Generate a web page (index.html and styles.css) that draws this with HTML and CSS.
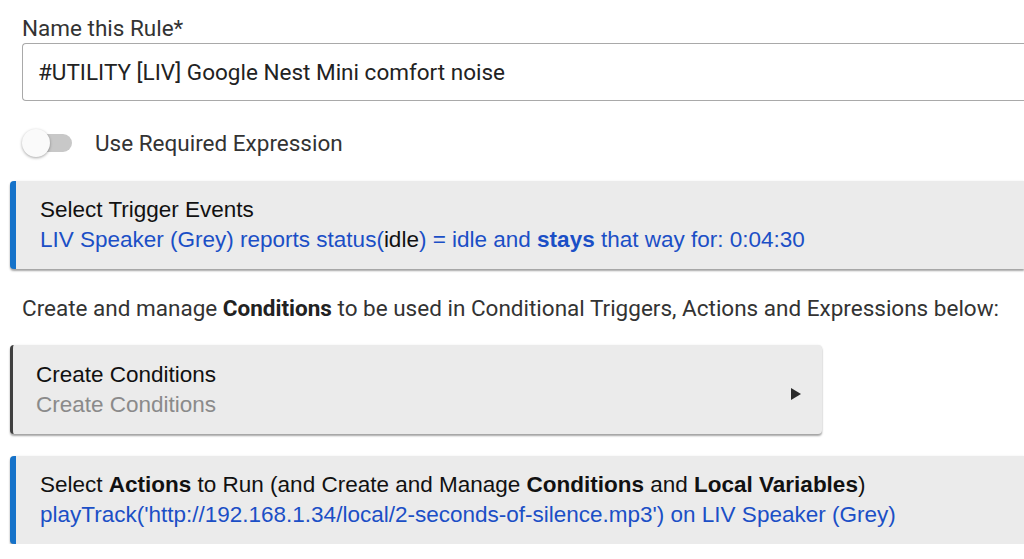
FILE: index.html
```html
<!DOCTYPE html>
<html lang="en">
<head>
    <meta charset="UTF-8">
    <meta name="viewport" content="width=device-width, initial-scale=1.0">
    <title>Rule</title>
    <link rel="stylesheet" href="styles.css">
</head>
<body>

<div class="page">
    <div class="field-label">Name this Rule*</div>
    <div class="name-input">#UTILITY [LIV] Google Nest Mini comfort noise</div>

    <!-- switch row -->
    <div class="switch-row">
        <span class="switch"><span class="knob"></span></span>
        <span class="switch-label">Use Required Expression</span>
    </div>

    <div class="card card-blue trigger-card">
        <div class="card-title">Select Trigger Events</div>
        <div class="card-desc">LIV Speaker (Grey) reports status(<span class="plain">idle</span>) = idle and <b>stays</b> that way for: 0:04:30</div>
    </div>

    <p class="note">Create and manage <b>Conditions</b> to be used in Conditional Triggers, Actions and Expressions below:</p>

    <div class="card card-dark cond-card">
        <div>
            <div class="card-title">Create Conditions</div>
            <div class="card-sub">Create Conditions</div>
        </div>
        <span class="arrow"></span>
    </div>

    <div class="card card-blue action-card">
        <div class="card-title">Select <b>Actions</b> to Run (and Create and Manage <b>Conditions</b> and <b>Local Variables</b>)</div>
        <div class="card-desc">playTrack('http://192.168.1.34/local/2-seconds-of-silence.mp3') on LIV Speaker (Grey)</div>
    </div>
</div>

</body>
</html>
```

FILE: styles.css
```css
html, body {
    margin: 0;
    overflow: hidden;
    background: #fff;
}

.page {
    font-family: Roboto, "Noto Sans", sans-serif;
    font-size: 22.5px;
    color: #333;
}

.field-label {
    margin: 15px 0 0 22px;
    line-height: 26px;
}

.name-input {
    margin: 2px 0 0 22px;
    height: 56px;
    line-height: 56px;
    border: 1px solid #a9a9a9;
    border-right: none;
    border-radius: 4px 0 0 4px;
    padding-left: 15px;
    color: #222;
}

.switch-row {
    display: flex;
    align-items: center;
    height: 30px;
    margin-top: 27px;
}

.switch {
    position: relative;
    width: 36px;
    height: 18px;
    margin-left: 36px;
    border-radius: 9px;
    background: #c8c8c8;
}

.knob {
    position: absolute;
    left: -14px;
    top: -5px;
    width: 28px;
    height: 28px;
    border-radius: 50%;
    background: #fafafa;
    box-shadow: 0 1px 3px rgba(0, 0, 0, 0.35);
}

.switch-label {
    margin-left: 23px;
    color: #333;
}

.card {
    margin-left: 10px;
    background: #ebebeb;
    border-radius: 4px 0 0 4px;
    box-shadow: 0 2px 2px rgba(0, 0, 0, 0.35), 0 0 2px rgba(0, 0, 0, 0.08);
    font-family: "Liberation Sans", Arial, sans-serif;
    font-size: 22.5px;
    line-height: 30px;
    color: #111;
    box-sizing: border-box;
}

.card-blue {
    border-left: 6px solid #1572c9;
    padding: 14px 0 14px 24px;
}

.trigger-card {
    margin-top: 23px;
}

.action-card {
    margin-top: 22px;
}

.card-desc {
    color: #1b4fc6;
}

.card-desc .plain {
    color: #111;
}

.note {
    margin: 27px 0 0 22px;
    line-height: 24px;
}

.note b {
    color: #222;
}

.card-dark {
    display: flex;
    align-items: center;
    justify-content: space-between;
    width: 812px;
    height: 89px;
    margin-top: 25px;
    border-left: 3px solid #3f3f3f;
    border-radius: 4px;
    padding: 0 21px 0 23px;
}

.card-sub {
    color: #8a8a8a;
}

.arrow {
    width: 0;
    height: 0;
    margin-top: 8px;
    border-top: 6px solid transparent;
    border-bottom: 6px solid transparent;
    border-left: 10px solid #2a2a2a;
}
```
